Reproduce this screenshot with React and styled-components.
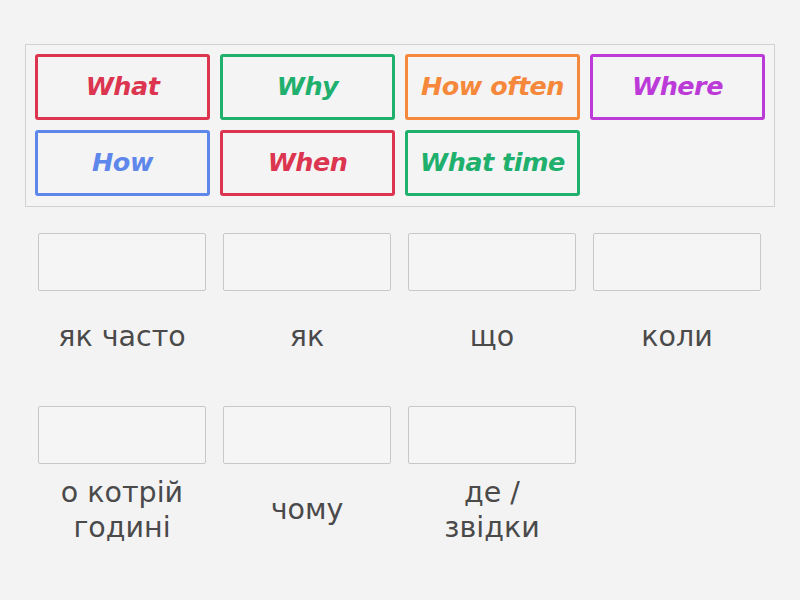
import styled, { createGlobalStyle } from 'styled-components';

const GlobalStyle = createGlobalStyle`
    html, body {
        margin: 0;
        padding: 0;
        background: #f4f3f4;
    }
    body {
        width: 800px;
        height: 600px;
        overflow: hidden;
    }
`;

const tiles = [
    {text: 'What', color: '#dc3550'},
    {text: 'Why', color: '#1fb06e'},
    {text: 'How often', color: '#f5883a'},
    {text: 'Where', color: '#bb3ad8'},
    {text: 'How', color: '#5d87ea'},
    {text: 'When', color: '#dc3550'},
    {text: 'What time', color: '#1fb06e'},
];

const targets = [
    ['як часто'],
    ['як'],
    ['що'],
    ['коли'],
    ['о котрій', 'годині'],
    ['чому'],
    ['де /', 'звідки'],
];

const App = () => {
    return (
        <Page>
            <GlobalStyle />
            <Bank>
                {tiles.map((t) => (
                    <Tile key={t.text} color={t.color}>{t.text}</Tile>
                ))}
            </Bank>
            <Targets>
                {targets.map((lines, i) => (
                    <Slot key={i}>
                        <DropBox />
                        <Label>
                            {lines.map((l) => <span key={l}>{l}</span>)}
                        </Label>
                    </Slot>
                ))}
            </Targets>
        </Page>
    );
}

const Page = styled.div`
    padding: 44px 25px 0 25px;
    display: flex;
    flex-direction: column;
`

const Bank = styled.div`
    display: grid;
    grid-template-columns: repeat(4, 175px);
    grid-auto-rows: 66px;
    gap: 10px;
    padding: 9px 9px 10px 9px;
    border: 1px solid #d2d1d2;
    background: #f5f4f5;
    width: 730px;
`

const Tile = styled.div`
    box-sizing: border-box;
    border: 3px solid ${(p) => p.color};
    border-radius: 3px;
    color: ${(p) => p.color};
    display: flex;
    align-items: center;
    justify-content: center;
    padding-bottom: 2px;
    font-family: "DejaVu Sans", sans-serif;
    font-weight: bold;
    font-style: italic;
    font-size: 25.5px;
    letter-spacing: -0.5px;
`

const Targets = styled.div`
    display: grid;
    grid-template-columns: repeat(4, 168px);
    column-gap: 17px;
    row-gap: 23px;
    margin-top: 26px;
    padding-left: 13px;
`

const Slot = styled.div`
    display: flex;
    flex-direction: column;
`

const DropBox = styled.div`
    box-sizing: border-box;
    height: 58px;
    border: 1px solid #c9c8c9;
    border-radius: 2px;
    background: #f6f5f6;
`

const Label = styled.div`
    height: 92px;
    display: flex;
    flex-direction: column;
    align-items: center;
    justify-content: center;
    padding-bottom: 1px;
    box-sizing: border-box;
    font-family: "DejaVu Sans", sans-serif;
    font-size: 28.5px;
    line-height: 35px;
    color: #4a4a4a;
`

export default App;
